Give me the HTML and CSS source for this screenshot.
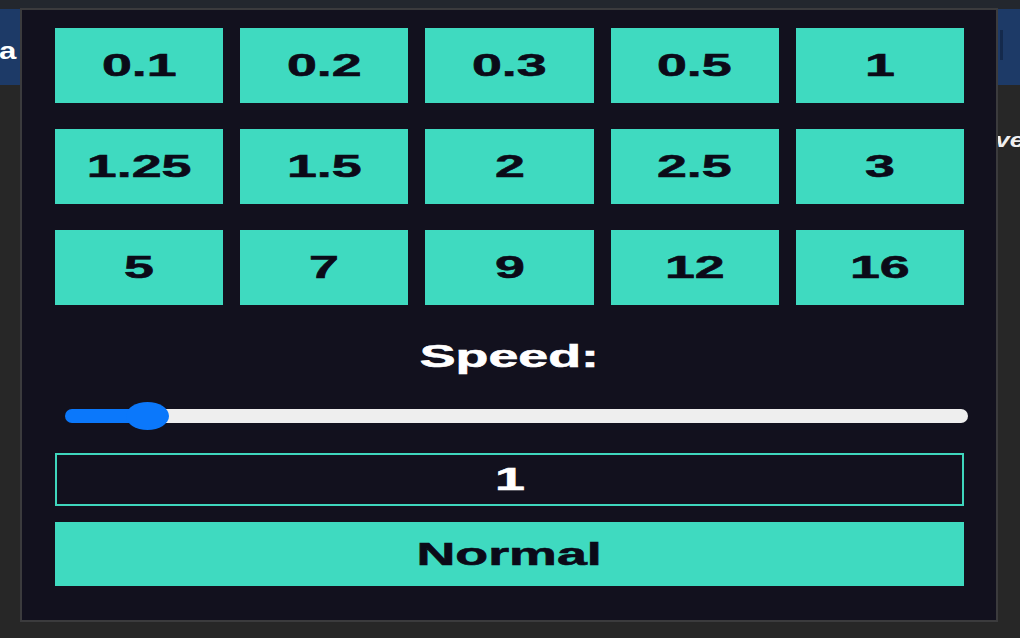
FILE: index.html
```html
<!DOCTYPE html>
<html lang="en">
<head>
<meta charset="utf-8">
<title>Speed</title>
<link rel="stylesheet" href="styles.css">
</head>
<body>
<div class="page">
  <div class="topstrip"></div>
  <header class="header">
    <span class="header-text">a</span>
    <span class="header-bar"></span>
  </header>
  <main class="content">
    <div class="content-row"><span class="content-text">ve</span></div>
  </main>
</div>

<div class="popup">
  <div class="grid">
    <button class="preset"><span class="lbl">0.1</span></button>
    <button class="preset"><span class="lbl">0.2</span></button>
    <button class="preset"><span class="lbl">0.3</span></button>
    <button class="preset"><span class="lbl">0.5</span></button>
    <button class="preset"><span class="lbl">1</span></button>
    <button class="preset"><span class="lbl">1.25</span></button>
    <button class="preset"><span class="lbl">1.5</span></button>
    <button class="preset"><span class="lbl">2</span></button>
    <button class="preset"><span class="lbl">2.5</span></button>
    <button class="preset"><span class="lbl">3</span></button>
    <button class="preset"><span class="lbl">5</span></button>
    <button class="preset"><span class="lbl">7</span></button>
    <button class="preset"><span class="lbl">9</span></button>
    <button class="preset"><span class="lbl">12</span></button>
    <button class="preset"><span class="lbl">16</span></button>
  </div>
  <div class="speed-label"><span class="lbl">Speed:</span></div>
  <input class="slider" type="range" min="0" max="14" step="0.01" value="1">
  <div class="value-box"><span class="lbl">1</span></div>
  <button class="normal"><span class="lbl">Normal</span></button>
</div>
</body>
</html>
```

FILE: styles.css
```css
* { box-sizing: border-box; }

html, body {
  margin: 0;
  padding: 0;
  width: 1020px;
  height: 638px;
  overflow: hidden;
  background: #272727;
  font-family: "Liberation Sans", Arial, sans-serif;
}

.page {
  display: flex;
  flex-direction: column;
  height: 638px;
}

.topstrip {
  height: 9px;
  background: #23272e;
}

.header {
  height: 76px;
  background: #1d3a67;
  display: flex;
  justify-content: space-between;
  align-items: flex-start;
  color: #ffffff;
}

.header-text {
  font-size: 24px;
  line-height: 24px;
  font-weight: 700;
  margin-top: 30px;
  margin-left: -1px;
  display: inline-block;
  transform: scaleX(1.3);
  transform-origin: left center;
}

.header-bar {
  width: 3px;
  height: 30px;
  margin-top: 21px;
  margin-right: 17px;
  background: #142a4d;
}

.content {
  flex: 1;
  background: #272727;
}

.content-row {
  display: flex;
  justify-content: flex-end;
  margin-top: 45px;
}

.content-text {
  color: #f0f0f0;
  font-size: 20px;
  font-weight: 700;
  font-style: italic;
  line-height: 20px;
  display: inline-block;
  margin-right: -4px;
  transform: scaleX(1.3);
  transform-origin: right center;
}

.popup {
  position: absolute;
  left: 20px;
  top: 8px;
  width: 978px;
  height: 614px;
  border: 2px solid #3b3b3d;
  background: #12111e;
  padding: 18px 32px 0 33px;
  display: flex;
  flex-direction: column;
}

.lbl {
  display: inline-block;
  font-family: "Liberation Sans", Arial, sans-serif;
  font-weight: 700;
  font-size: 32px;
  line-height: 37px;
  -webkit-text-stroke: 0.6px currentColor;
  transform: scaleX(1.68);
}

.grid {
  display: grid;
  grid-template-columns: repeat(5, 1fr);
  grid-auto-rows: 75px;
  column-gap: 17px;
  row-gap: 26px;
  width: 909px;
}

.preset,
.normal {
  border: 0;
  margin: 0;
  padding: 0;
  background: #3fdac0;
  color: #0b0a18;
  display: flex;
  align-items: center;
  justify-content: center;
  cursor: pointer;
}

.speed-label {
  margin-top: 33px;
  color: #ffffff;
  text-align: center;
  width: 909px;
}

.slider {
  -webkit-appearance: none;
  appearance: none;
  margin: 27px 0 0 10px;
  width: 903px;
  height: 28px;
  background: transparent;
  padding: 0;
}

.slider::-webkit-slider-runnable-track {
  height: 14px;
  border-radius: 7px;
  background: linear-gradient(to right, #0b78fb 0, #0b78fb 9.2%, #eeeeee 9.2%, #eeeeee 100%);
}

.slider::-webkit-slider-thumb {
  -webkit-appearance: none;
  appearance: none;
  width: 43px;
  height: 28px;
  border-radius: 50%;
  background: #0b78fb;
  border: 0;
  margin-top: -7px;
}

.value-box {
  margin-top: 23px;
  width: 909px;
  height: 53px;
  border: 2px solid #3fd6bd;
  background: #12111e;
  color: #ffffff;
  display: flex;
  align-items: center;
  justify-content: center;
}

.normal {
  margin-top: 16px;
  width: 909px;
  height: 64px;
}
```
